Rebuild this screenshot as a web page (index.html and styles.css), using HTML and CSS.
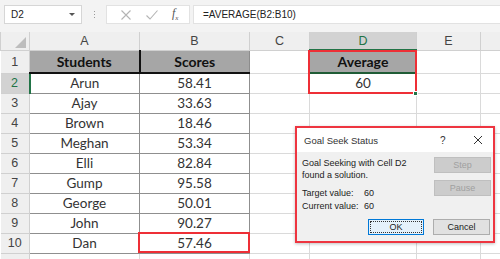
FILE: index.html
```html
<!DOCTYPE html>
<html>
<head>
<meta charset="utf-8">
<link rel="stylesheet" href="styles.css">
</head>
<body>
<div class="app">
  <div class="toolbar">
    <div class="namebox"><span>D2</span><span class="caret"></span></div>
    <div class="dots"><i></i><i></i><i></i></div>
    <div class="fbtns">
      <svg width="12" height="12" viewBox="0 0 12 12"><path d="M1.5 1.5 L10.5 10.5 M10.5 1.5 L1.5 10.5" stroke="#b4b4b4" stroke-width="1.1" fill="none"/></svg>
      <svg width="14" height="12" viewBox="0 0 14 12"><path d="M1.5 6.5 L5 10 L12.5 1.5" stroke="#b4b4b4" stroke-width="1.1" fill="none"/></svg>
      <span class="fx">f<sub>x</sub></span>
    </div>
    <div class="formula">=AVERAGE(B2:B10)</div>
  </div>
  <div class="sheet">
    <table class="grid">
      <colgroup>
        <col class="c0"><col class="ca"><col class="cb"><col class="cc"><col class="cd"><col class="ce"><col class="cf">
      </colgroup>
      <tr class="hdr">
        <td class="corner"><span class="tri"></span></td><td>A</td><td>B</td><td>C</td><td class="sel">D</td><td>E</td><td></td>
      </tr>
      <tr class="r1">
        <td class="rh">1</td><td class="th b-r">Students</td><td class="th">Scores</td><td></td><td class="th avg">Average</td><td></td><td></td>
      </tr>
      <tr><td class="rh rsel">2</td><td class="d">Arun</td><td class="d">58.41</td><td></td><td class="d act">60</td><td></td><td></td></tr>
      <tr><td class="rh">3</td><td class="d">Ajay</td><td class="d">33.63</td><td></td><td></td><td></td><td></td></tr>
      <tr><td class="rh">4</td><td class="d">Brown</td><td class="d">18.46</td><td></td><td></td><td></td><td></td></tr>
      <tr><td class="rh">5</td><td class="d">Meghan</td><td class="d">53.34</td><td></td><td></td><td></td><td></td></tr>
      <tr><td class="rh">6</td><td class="d">Elli</td><td class="d">82.84</td><td></td><td></td><td></td><td></td></tr>
      <tr><td class="rh">7</td><td class="d">Gump</td><td class="d">95.58</td><td></td><td></td><td></td><td></td></tr>
      <tr><td class="rh">8</td><td class="d">George</td><td class="d">50.01</td><td></td><td></td><td></td><td></td></tr>
      <tr><td class="rh">9</td><td class="d">John</td><td class="d">90.27</td><td></td><td></td><td></td><td></td></tr>
      <tr><td class="rh">10</td><td class="d">Dan</td><td class="d">57.46</td><td></td><td></td><td></td><td></td></tr>
      <tr><td class="rh"></td><td></td><td></td><td></td><td></td><td></td><td></td></tr>
    </table>
    <div class="mark mark-d"></div>
    <div class="mark mark-b"></div>
    <div class="handle"></div>
  </div>
  <div class="dialog">
    <div class="dtitle"><span class="dt">Goal Seek Status</span><span class="q">?</span>
      <svg class="x" width="10" height="10" viewBox="0 0 10 10"><path d="M1 1 L9 9 M9 1 L1 9" stroke="#333" stroke-width="1" fill="none"/></svg>
    </div>
    <div class="dbody">
      <div class="dmain">
        <div class="dtext">
          <div>Goal Seeking with Cell D2</div>
          <div>found a solution.</div>
          <div class="vals">
            <div class="vrow"><span class="lbl">Target value:</span><span>60</span></div>
            <div class="vrow"><span class="lbl">Current value:</span><span>60</span></div>
          </div>
        </div>
        <div class="side">
          <div class="btn dis">Step</div>
          <div class="btn dis">Pause</div>
        </div>
      </div>
      <div class="dfoot">
        <div class="btn ok"><span>OK</span></div>
        <div class="btn">Cancel</div>
      </div>
    </div>
  </div>
</div>
</body>
</html>
```
FILE: styles.css
```css
* { box-sizing: border-box; }
html, body { margin: 0; padding: 0; }
body { width: 500px; height: 259px; overflow: hidden; background: #fff; font-family: "Liberation Sans", Arial, sans-serif; }
.app { position: relative; width: 500px; height: 259px; overflow: hidden; }

.toolbar { height: 32px; background: #f3f3f3; display: flex; align-items: flex-start; padding-top: 5px; }
.namebox { margin-left: 4px; width: 78px; height: 19px; background: #fff; border: 1px solid #d6d6d6; display: flex; align-items: center; justify-content: space-between; padding: 0 6px 0 6px; font-size: 10px; color: #222; }
.caret { width: 0; height: 0; border-left: 3px solid transparent; border-right: 3px solid transparent; border-top: 3px solid #555; }
.dots { width: 24px; height: 19px; display: flex; flex-direction: column; align-items: center; justify-content: center; gap: 2px; }
.dots i { display: block; width: 1px; height: 1px; background: #999; }
.fbtns { width: 84px; height: 19px; background: #fff; border: 1px solid #e2e2e2; display: flex; align-items: center; justify-content: space-around; padding: 0 4px 0 6px; }
.fx { font-family: "Liberation Serif", serif; font-style: italic; font-size: 12px; color: #555; }
.fx sub { font-size: 7px; }
.formula { margin-left: 3px; flex: 1; height: 19px; background: #fff; border: 1px solid #e2e2e2; border-right: none; font-size: 10px; color: #222; display: flex; align-items: center; padding-left: 9px; }

.sheet { position: relative; }
.grid { border-collapse: collapse; table-layout: fixed; width: 530px; font-family: Lato, "Open Sans", sans-serif; }
.c0 { width: 29px; } .ca { width: 110px; } .cb { width: 110px; } .cc { width: 60px; } .cd { width: 107px; } .ce { width: 64px; } .cf { width: 50px; }
.grid td { border: 1px solid #dadada; padding: 0; height: 20px; text-align: center; font-size: 13.5px; color: #333; white-space: nowrap; overflow: hidden; }
.hdr td { height: 18px; background: #efefef; border-color: #d0d0d0; color: #444; font-size: 12.5px; font-family: "Liberation Sans", Arial, sans-serif; border-top: none; }
.hdr td.sel { background: #d2d2d2; color: #217346; border-bottom: 2px solid #217346; }
.corner { position: relative; }
.tri { position: absolute; right: 3px; bottom: 2px; width: 0; height: 0; border-left: 11px solid transparent; border-bottom: 11px solid #bdbdbd; }
.r1 td { height: 23px; }
.rh { background: #efefef; border-color: #d0d0d0 !important; color: #444 !important; font-size: 12.5px !important; font-family: "Liberation Sans", Arial, sans-serif; border-left: none !important; }
.rsel { background: #d2d2d2; color: #217346 !important; border-right: 2px solid #217346 !important; }
.th { background: #a6a6a6; font-weight: bold; color: #111 !important; font-size: 14px !important; border-color: #8c8c8c !important; border-bottom: 2px solid #111 !important; }
.th.b-r { border-right: 2px solid #111 !important; }
.th.avg { border-bottom: 2px solid #1f5c36 !important; }
.d { border-color: #8f8f8f !important; }

.mark { position: absolute; border: 2px solid #ee2f36; pointer-events: none; }
.mark-d { left: 308px; top: 18px; width: 109px; height: 44px; }
.mark-b { left: 138px; top: 200px; width: 112px; height: 21px; }
.handle { position: absolute; left: 413px; top: 59px; width: 5px; height: 5px; background: #217346; border: 1px solid #fff; }

.dialog { position: absolute; left: 295px; top: 126px; width: 200px; height: 117px; border: 2px solid #ee3540; background: #f0f0f0; font-family: "Liberation Sans", Arial, sans-serif; font-size: 9px; color: #222; box-shadow: 0 1px 3px rgba(0,0,0,0.25); }
.dtitle { height: 24px; background: #fff; display: flex; align-items: center; padding-left: 7px; }
.dt { flex: 1; font-size: 9.5px; color: #333; }
.q { width: 12px; font-size: 10px; color: #333; margin-right: 21px; }
.x { margin-right: 10px; }
.dbody { padding: 5px 2px 0 5px; }
.dmain { display: flex; justify-content: space-between; }
.dtext { line-height: 12px; padding-top: 0; }
.vals { margin-top: 6px; line-height: 13px; }
.vrow { display: flex; }
.lbl { width: 62px; }
.side { display: flex; flex-direction: column; gap: 7px; }
.btn { width: 57px; height: 16px; background: #e1e1e1; border: 1px solid #adadad; display: flex; align-items: center; justify-content: center; font-size: 9px; color: #222; }
.btn.dis { background: #cccccc; border-color: #bfbfbf; color: #a0a0a0; }
.dfoot { display: flex; justify-content: flex-end; gap: 9px; margin-top: 6px; margin-right: 1px; }
.btn.ok { width: 56px; border: 1px solid #0078d7; background: #e5f1fb; padding: 1px; }
.btn.ok span { display: flex; width: 100%; height: 100%; align-items: center; justify-content: center; border: 1px dotted #333; }
```
